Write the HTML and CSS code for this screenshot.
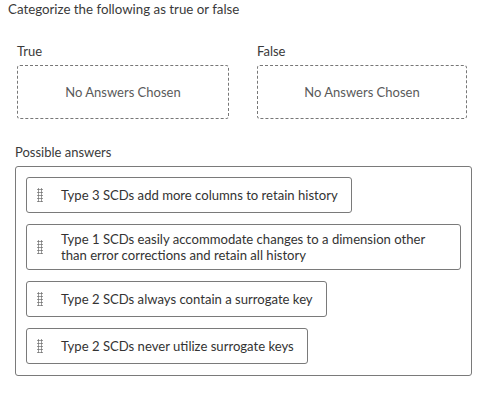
FILE: index.html
```
<!DOCTYPE html>
<html>
<head>
<meta charset="utf-8">
<link rel="stylesheet" href="styles.css">
</head>
<body>
<div class="page">
  <div class="title">Categorize the following as true or false</div>
  <div class="cats">
    <div class="cat">
      <div class="cat-label">True</div>
      <div class="drop">No Answers Chosen</div>
    </div>
    <div class="cat cat-false">
      <div class="cat-label">False</div>
      <div class="drop">No Answers Chosen</div>
    </div>
  </div>
  <div class="pool-label">Possible answers</div>
  <div class="pool">
    <div class="item"><span class="handle"></span><span class="item-text">Type 3 SCDs add more columns to retain history</span></div>
    <div class="item item-wide"><span class="handle"></span><span class="item-text">Type 1 SCDs easily accommodate changes to a dimension other than error corrections and retain all history</span></div>
    <div class="item"><span class="handle"></span><span class="item-text">Type 2 SCDs always contain a surrogate key</span></div>
    <div class="item"><span class="handle"></span><span class="item-text">Type 2 SCDs never utilize surrogate keys</span></div>
  </div>
</div>
</body>
</html>
```
FILE: styles.css
```
html, body {
  margin: 0;
  padding: 0;
  background: #ffffff;
}
body {
  font-family: Lato, "Liberation Sans", sans-serif;
  font-size: 13px;
  color: #3c3c3c;
}
.page {
  width: 482px;
  height: 401px;
  overflow: hidden;
}
.title {
  padding: 1px 0 0 8px;
  line-height: 16px;
  font-size: 13.3px;
  color: #3a3a3a;
}
.cats {
  display: flex;
  gap: 28px;
  padding: 26px 0 0 17px;
}
.cat {
  width: 212px;
  display: flex;
  flex-direction: column;
}
.cat-false {
  width: 210px;
}
.cat-label {
  line-height: 16px;
  color: #3a3a3a;
}
.drop {
  margin-top: 6px;
  height: 54px;
  box-sizing: border-box;
  border: 1px dashed #777;
  border-radius: 3px;
  display: flex;
  align-items: center;
  justify-content: center;
  color: #5a5a5a;
}
.pool-label {
  padding: 25px 0 0 15px;
  line-height: 16px;
  color: #3a3a3a;
}
.pool {
  margin: 6px 0 0 15px;
  width: 457px;
  height: 210px;
  box-sizing: border-box;
  border: 1px solid #7a7a7a;
  border-radius: 3px;
  padding: 10px 10px;
  display: flex;
  flex-direction: column;
  align-items: flex-start;
  gap: 11px;
}
.item {
  display: flex;
  align-items: center;
  min-height: 36px;
  box-sizing: border-box;
  border: 1px solid #7a7a7a;
  border-radius: 3px;
  padding: 6px 13px 6px 10px;
  line-height: 16px;
  color: #333;
  font-size: 13.1px;
}
.item-wide {
  width: 435px;
}
.handle {
  flex: none;
  width: 6px;
  height: 14px;
  margin-right: 18px;
  background-image: radial-gradient(circle, #7a7a7a 0.9px, transparent 1.3px);
  background-size: 3px 3px;
  background-position: 0 0;
}
.item-text {
  display: block;
}
```
